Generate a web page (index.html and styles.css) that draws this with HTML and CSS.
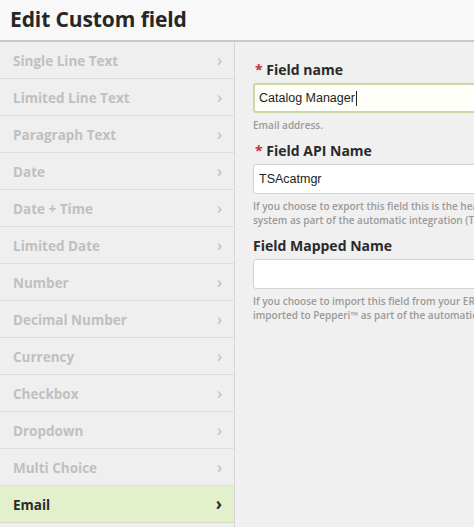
FILE: index.html
```html
<!DOCTYPE html>
<html>
<head>
<meta charset="utf-8">
<link rel="stylesheet" href="styles.css">
</head>
<body>
<div class="page">
  <header class="header"><h1>Edit Custom field</h1></header>
  <div class="main">
    <nav class="sidebar">
      <div class="item">Single Line Text<span class="chev">›</span></div>
      <div class="item">Limited Line Text<span class="chev">›</span></div>
      <div class="item">Paragraph Text<span class="chev">›</span></div>
      <div class="item">Date<span class="chev">›</span></div>
      <div class="item">Date + Time<span class="chev">›</span></div>
      <div class="item">Limited Date<span class="chev">›</span></div>
      <div class="item">Number<span class="chev">›</span></div>
      <div class="item">Decimal Number<span class="chev">›</span></div>
      <div class="item">Currency<span class="chev">›</span></div>
      <div class="item">Checkbox<span class="chev">›</span></div>
      <div class="item">Dropdown<span class="chev">›</span></div>
      <div class="item">Multi Choice<span class="chev">›</span></div>
      <div class="item active">Email<span class="chev">›</span></div>
    </nav>
    <section class="form">
      <div class="field">
        <label class="label"><span class="req">*</span> Field name</label>
        <div class="input focus">Catalog Manager<span class="caret"></span></div>
        <p class="help">Email address.</p>
      </div>
      <div class="field">
        <label class="label"><span class="req">*</span> Field API Name</label>
        <div class="input">TSAcatmgr</div>
        <p class="help">If you choose to export this field this is the header name that will be used in your ERP<br>system as part of the automatic integration (TSA)</p>
      </div>
      <div class="field">
        <label class="label">Field Mapped Name</label>
        <div class="input"></div>
        <p class="help">If you choose to import this field from your ERP this is the header name that will be<br>imported to Pepperi™ as part of the automatic integration</p>
      </div>
    </section>
  </div>
</div>
</body>
</html>
```

FILE: styles.css
```css
html, body {
  margin: 0;
  padding: 0;
}
body {
  width: 474px;
  height: 527px;
  overflow: hidden;
  background: #f0f0f0;
  font-family: "Open Sans", "DejaVu Sans", sans-serif;
}
.page {
  display: flex;
  flex-direction: column;
  height: 527px;
}
.header {
  height: 42px;
  box-sizing: border-box;
  background: #f8f8f8;
  border-bottom: 2px solid #c9c9c9;
  display: flex;
  align-items: center;
  padding: 0 0 2px 10px;
}
.header h1 {
  margin: 0;
  font-size: 21px;
  font-weight: 700;
  color: #262626;
  letter-spacing: -0.1px;
}
.main {
  display: flex;
  flex: 1;
  min-height: 0;
}
.sidebar {
  width: 234px;
  flex: none;
  background: #efefef;
  border-right: 1px solid #d6d6d6;
  display: flex;
  flex-direction: column;
}
.item {
  height: 37px;
  box-sizing: border-box;
  border-bottom: 1px solid #dedede;
  display: flex;
  align-items: center;
  justify-content: space-between;
  padding: 1px 12px 0 13px;
  font-size: 13.5px;
  font-weight: 700;
  color: #c0c0c0;
}
.chev {
  font-size: 17px;
  font-weight: 400;
  color: #b8b8b8;
  line-height: 1;
  margin-top: -3px;
}
.item.active {
  background: #e3f0cc;
  color: #2a2a2a;
  border-bottom-color: #d4dcc6;
}
.item.active .chev {
  color: #2a2a2a;
  font-weight: 700;
}
.form {
  flex: 1;
  min-width: 0;
  padding: 18px 0 0 18px;
  overflow: hidden;
  background: #f0f0f0;
}
.field {
  margin-bottom: 9px;
}
.label {
  display: block;
  font-size: 14px;
  font-weight: 700;
  color: #2a2a2a;
  line-height: 20px;
  margin-bottom: 3px;
  white-space: nowrap;
}
.req {
  color: #c9303a;
  margin-left: 2px;
}
.input {
  width: 300px;
  height: 30px;
  box-sizing: border-box;
  background: #fff;
  border: 1px solid #d2d2d2;
  border-radius: 3px;
  font-family: "Liberation Sans", Arial, sans-serif;
  font-size: 12.5px;
  color: #222;
  display: flex;
  align-items: center;
  padding-left: 5px;
}
.input.focus {
  border: 2px solid #cdd7a6;
  background: #fffffa;
  padding-left: 4px;
}
.caret {
  display: inline-block;
  width: 1px;
  height: 15px;
  background: #222;
  margin-left: 1px;
}
.help {
  margin: 5px 0 0 0;
  font-size: 10px;
  font-weight: 600;
  color: #9a9a9a;
  line-height: 14px;
  white-space: nowrap;
}
```
